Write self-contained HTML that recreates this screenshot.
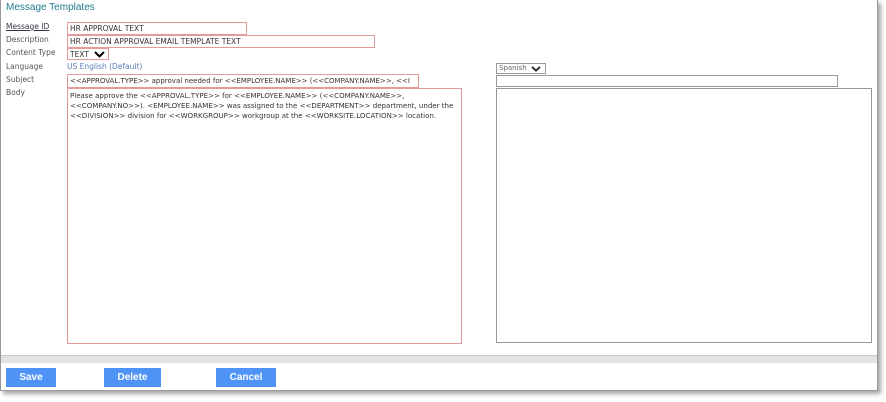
<!DOCTYPE html>
<html><head><style>
body{margin:0;width:886px;height:402px;background:#fff;font-family:"DejaVu Sans","Liberation Sans",sans-serif;position:relative;overflow:hidden}
.frame{position:absolute;left:0;top:0;width:876px;height:390px;border:1px solid #999;border-top:none;box-shadow:3px 3px 4px rgba(0,0,0,.35)}
.a{position:absolute;font-size:7.5px;color:#555;white-space:nowrap}
.b{position:absolute;border:1px solid #e39a9a;box-sizing:border-box;font-size:7.5px;color:#333;padding:2px 2px;white-space:nowrap;overflow:hidden}
.g{position:absolute;border:1px solid #999;box-sizing:border-box}
.btn{position:absolute;top:368px;height:19px;background:#4f93f7;color:#fff;font-family:"Liberation Sans",sans-serif;font-weight:bold;font-size:10px;text-align:center;line-height:19px}
</style></head><body>
<div class="frame"></div>
<div class="a" style="left:6px;top:2px;font-size:10px;color:#1f7a8c;font-family:'Liberation Sans',sans-serif">Message Templates</div>
<div class="a" style="left:6px;top:22px;color:#334;text-decoration:underline">Message ID</div>
<div class="a" style="left:6px;top:35px">Description</div>
<div class="a" style="left:6px;top:48px">Content Type</div>
<div class="a" style="left:6px;top:62px">Language</div>
<div class="a" style="left:6px;top:75px">Subject</div>
<div class="a" style="left:6px;top:88px">Body</div>
<div class="b" style="left:67px;top:22px;width:180px;height:13px;padding-top:1px">HR APPROVAL TEXT</div>
<div class="b" style="left:67px;top:35px;width:308px;height:13px;padding-top:1px">HR ACTION APPROVAL EMAIL TEMPLATE TEXT</div>
<div class="b" style="left:67px;top:48px;width:42px;height:12px;padding-top:1px">TEXT</div>
<svg style="position:absolute;left:94px;top:51px" width="11" height="7"><path d="M1 1L5.5 5.5L10 1" stroke="#000" stroke-width="2" fill="none"/></svg>
<div class="a" style="left:67px;top:62px;color:#5a7fb5">US English (Default)</div>
<div class="b" style="left:67px;top:74px;width:352px;height:14px;font-size:7px;padding-top:2px">&lt;&lt;APPROVAL.TYPE&gt;&gt; approval needed for &lt;&lt;EMPLOYEE.NAME&gt;&gt; (&lt;&lt;COMPANY.NAME&gt;&gt;, &lt;&lt;I</div>
<div class="b" style="left:67px;top:88px;width:395px;height:256px;white-space:normal;line-height:10px;padding:2px 2px;font-size:7.05px">Please approve the &lt;&lt;APPROVAL.TYPE&gt;&gt; for &lt;&lt;EMPLOYEE.NAME&gt;&gt; (&lt;&lt;COMPANY.NAME&gt;&gt;,<br>&lt;&lt;COMPANY.NO&gt;&gt;). &lt;EMPLOYEE.NAME&gt;&gt; was assigned to the &lt;&lt;DEPARTMENT&gt;&gt; department, under the<br>&lt;&lt;DIVISION&gt;&gt; division for &lt;&lt;WORKGROUP&gt;&gt; workgroup at the &lt;&lt;WORKSITE.LOCATION&gt;&gt; location.</div>
<div class="g" style="left:496px;top:63px;width:50px;height:11px"></div>
<div class="a" style="left:499px;top:64px;font-size:7px;color:#666">Spanish</div>
<svg style="position:absolute;left:531px;top:66px" width="10" height="6"><path d="M1 1L5 4.5L9 1" stroke="#333" stroke-width="2" fill="none"/></svg>
<div class="g" style="left:496px;top:75px;width:342px;height:12px"></div>
<div class="g" style="left:496px;top:88px;width:376px;height:255px"></div>
<div style="position:absolute;left:1px;top:355px;width:876px;height:7px;background:#e3e3e3;border-top:1px solid #c8c8c8"></div>
<div class="btn" style="left:6px;width:50px">Save</div>
<div class="btn" style="left:104px;width:57px">Delete</div>
<div class="btn" style="left:216px;width:60px">Cancel</div>
</body></html>
